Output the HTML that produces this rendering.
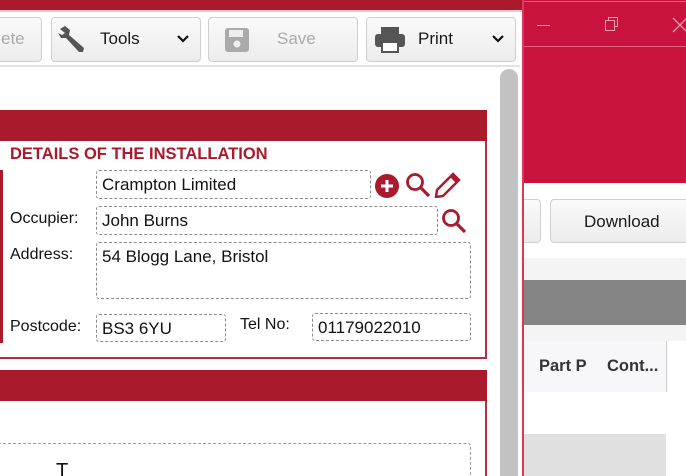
<!DOCTYPE html>
<html><head><style>
*{margin:0;padding:0;box-sizing:border-box}
html,body{width:686px;height:476px;overflow:hidden}
body{background:#fff;position:relative;font-family:"Liberation Sans",sans-serif;color:#1a1a1a}
.a{position:absolute}
.btn{position:absolute;top:17px;height:45px;border:1px solid #cfcfcf;border-radius:4px;background:linear-gradient(#fafafa,#ececec);font-size:17px}
.fld{position:absolute;border:1px dashed #8a8a8a;border-radius:3px;font-size:17px;padding:4px 0 0 5px;color:#111}
.lbl{position:absolute;font-size:16px;color:#111}
</style></head><body>
<div class="a" style="left:0;top:0;width:522px;height:10px;background:#a81a2c"></div>
<div class="a" style="left:0;top:10px;width:522px;height:2px;background:#e8c8cc"></div>
<div class="btn" style="left:-20px;width:62px"><span class="a" style="left:20px;top:11px;color:#aaa">ete</span></div>
<div class="btn" style="left:51px;width:150px">
<svg class="a" style="left:5px;top:7px" width="30" height="30" viewBox="0 0 30 30"><path d="M3 4 L8 1 L13 5 L12 10 L27 23 L26 27 L22 27 L9 13 L4 13 L1 8 L5 10 L8 8 Z" fill="#555"/></svg>
<span class="a" style="left:48px;top:11px">Tools</span>
<svg class="a" style="left:125px;top:17px" width="12" height="9"><path d="M1 1 L6 6 L11 1" stroke="#111" stroke-width="2.2" fill="none"/></svg></div>
<div class="btn" style="left:208px;width:150px">
<svg class="a" style="left:15px;top:9px" width="26" height="26"><rect x="1" y="1" width="24" height="24" rx="3" fill="#aaa"/><rect x="5" y="3" width="14" height="7" fill="#eee"/><circle cx="13" cy="17" r="3.5" fill="#eee"/></svg>
<span class="a" style="left:68px;top:11px;color:#aaa">Save</span></div>
<div class="btn" style="left:366px;width:150px">
<svg class="a" style="left:8px;top:9px" width="30" height="26"><rect x="6" y="0" width="18" height="7" fill="#555"/><rect x="0" y="7" width="30" height="13" rx="3" fill="#555"/><rect x="7" y="15" width="16" height="10" fill="#fff" stroke="#555" stroke-width="2"/></svg>
<span class="a" style="left:51px;top:11px">Print</span>
<svg class="a" style="left:125px;top:17px" width="12" height="9"><path d="M1 1 L6 6 L11 1" stroke="#111" stroke-width="2.2" fill="none"/></svg></div>
<div class="a" style="left:0;top:65px;width:520px;height:2px;background:#e2e2e2"></div>
<div class="a" style="left:500px;top:69px;width:18px;height:420px;background:#c2c2c2;border-radius:9px"></div>

<div class="a" style="left:0;top:110px;width:487px;height:31px;background:#a81a2c"></div>
<div class="a" style="left:0;top:141px;width:487px;height:218px;border-right:2px solid #b0303e;border-bottom:2px solid #b0303e"></div>
<div class="a" style="left:0;top:170px;width:3px;height:173px;background:#a81a2c"></div>
<div class="a" style="left:10px;top:145px;font-size:16.5px;font-weight:bold;color:#a81a2c">DETAILS OF THE INSTALLATION</div>
<div class="fld" style="left:96px;top:170px;width:275px;height:29px">Crampton Limited</div>
<svg class="a" style="left:375px;top:174px" width="24" height="24"><circle cx="12" cy="12" r="12" fill="#a81a2c"/><path d="M12 6v12M6 12h12" stroke="#fff" stroke-width="3"/></svg>
<svg class="a" style="left:405px;top:172px" width="26" height="26"><circle cx="10" cy="10" r="7.5" stroke="#a81a2c" stroke-width="2.8" fill="none"/><path d="M15.5 15.5 L24 24" stroke="#a81a2c" stroke-width="3.2"/></svg>
<svg class="a" style="left:433px;top:172px" width="28" height="26"><path d="M3 25 L4 18 L20 2 L26 8 L10 24 Z M18 4 L24 10" stroke="#a81a2c" stroke-width="2.5" fill="none"/><path d="M20 2 L26 8 L23 11 L17 5Z" fill="#a81a2c"/></svg>
<div class="lbl" style="left:10px;top:210px">Occupier:</div>
<div class="fld" style="left:96px;top:206px;width:342px;height:29px">John Burns</div>
<svg class="a" style="left:441px;top:208px" width="26" height="26"><circle cx="10" cy="10" r="7.5" stroke="#a81a2c" stroke-width="2.8" fill="none"/><path d="M15.5 15.5 L24 24" stroke="#a81a2c" stroke-width="3.2"/></svg>
<div class="lbl" style="left:10px;top:246px">Address:</div>
<div class="fld" style="left:96px;top:242px;width:375px;height:57px">54 Blogg Lane, Bristol</div>
<div class="lbl" style="left:10px;top:318px">Postcode:</div>
<div class="fld" style="left:96px;top:314px;width:130px;height:28px">BS3 6YU</div>
<div class="lbl" style="left:240px;top:316px">Tel No:</div>
<div class="fld" style="left:312px;top:313px;width:159px;height:28px">01179022010</div>

<div class="a" style="left:0;top:370px;width:487px;height:31px;background:#a81a2c"></div>
<div class="a" style="left:0;top:401px;width:487px;height:80px;border-right:2px solid #b0303e"></div>
<div class="a" style="left:-5px;top:443px;width:476px;height:50px;border:1px dashed #9a9a9a;border-radius:3px"></div>
<div class="a" style="left:56px;top:460px;font-size:20px;color:#111">T</div>

<div class="a" style="left:522px;top:0;width:164px;height:476px;background:#fff;border-left:2px solid #d93a5c;overflow:hidden">
<div class="a" style="left:0;top:0;width:162px;height:183px;background:#c8133f"></div>
<div class="a" style="left:0;top:1px;width:162px;height:1px;background:#e06080"></div>
<div class="a" style="left:0;top:46px;width:162px;height:1px;background:#e06080"></div>
<div class="a" style="left:13px;top:25px;width:13px;height:1px;background:#f0a0b0"></div>
<div class="a" style="left:84px;top:17px;width:10px;height:10px;border:1px solid #f0a0b0"></div>
<div class="a" style="left:81px;top:20px;width:10px;height:11px;border:1px solid #f0a0b0;background:#c8133f"></div>
<svg class="a" style="left:148px;top:17px" width="16" height="16"><path d="M1 1L15 15M15 1L1 15" stroke="#f0a0b0" stroke-width="1.3"/></svg>
<div class="btn" style="left:-30px;top:199px;width:47px;height:44px"></div>
<div class="btn" style="left:26px;top:199px;width:150px;height:44px"><span class="a" style="left:33px;top:12px">Download</span></div>
<div class="a" style="left:0;top:258px;width:162px;height:22px;background:#f4f4f4"></div>
<div class="a" style="left:0;top:280px;width:162px;height:45px;background:#858585"></div>
<div class="a" style="left:0;top:325px;width:162px;height:16px;background:#f4f4f4"></div>
<div class="a" style="left:0;top:341px;width:143px;height:51px;background:#f7f7f9;border-right:1px solid #ccc"></div>
<div class="a" style="left:15px;top:357px;font-size:16.5px;font-weight:bold;color:#333">Part P</div>
<div class="a" style="left:83px;top:357px;font-size:16.5px;font-weight:bold;color:#333">Cont...</div>
<div class="a" style="left:0;top:434px;width:142px;height:42px;background:#e0e0e0"></div>
</div>
</body></html>
